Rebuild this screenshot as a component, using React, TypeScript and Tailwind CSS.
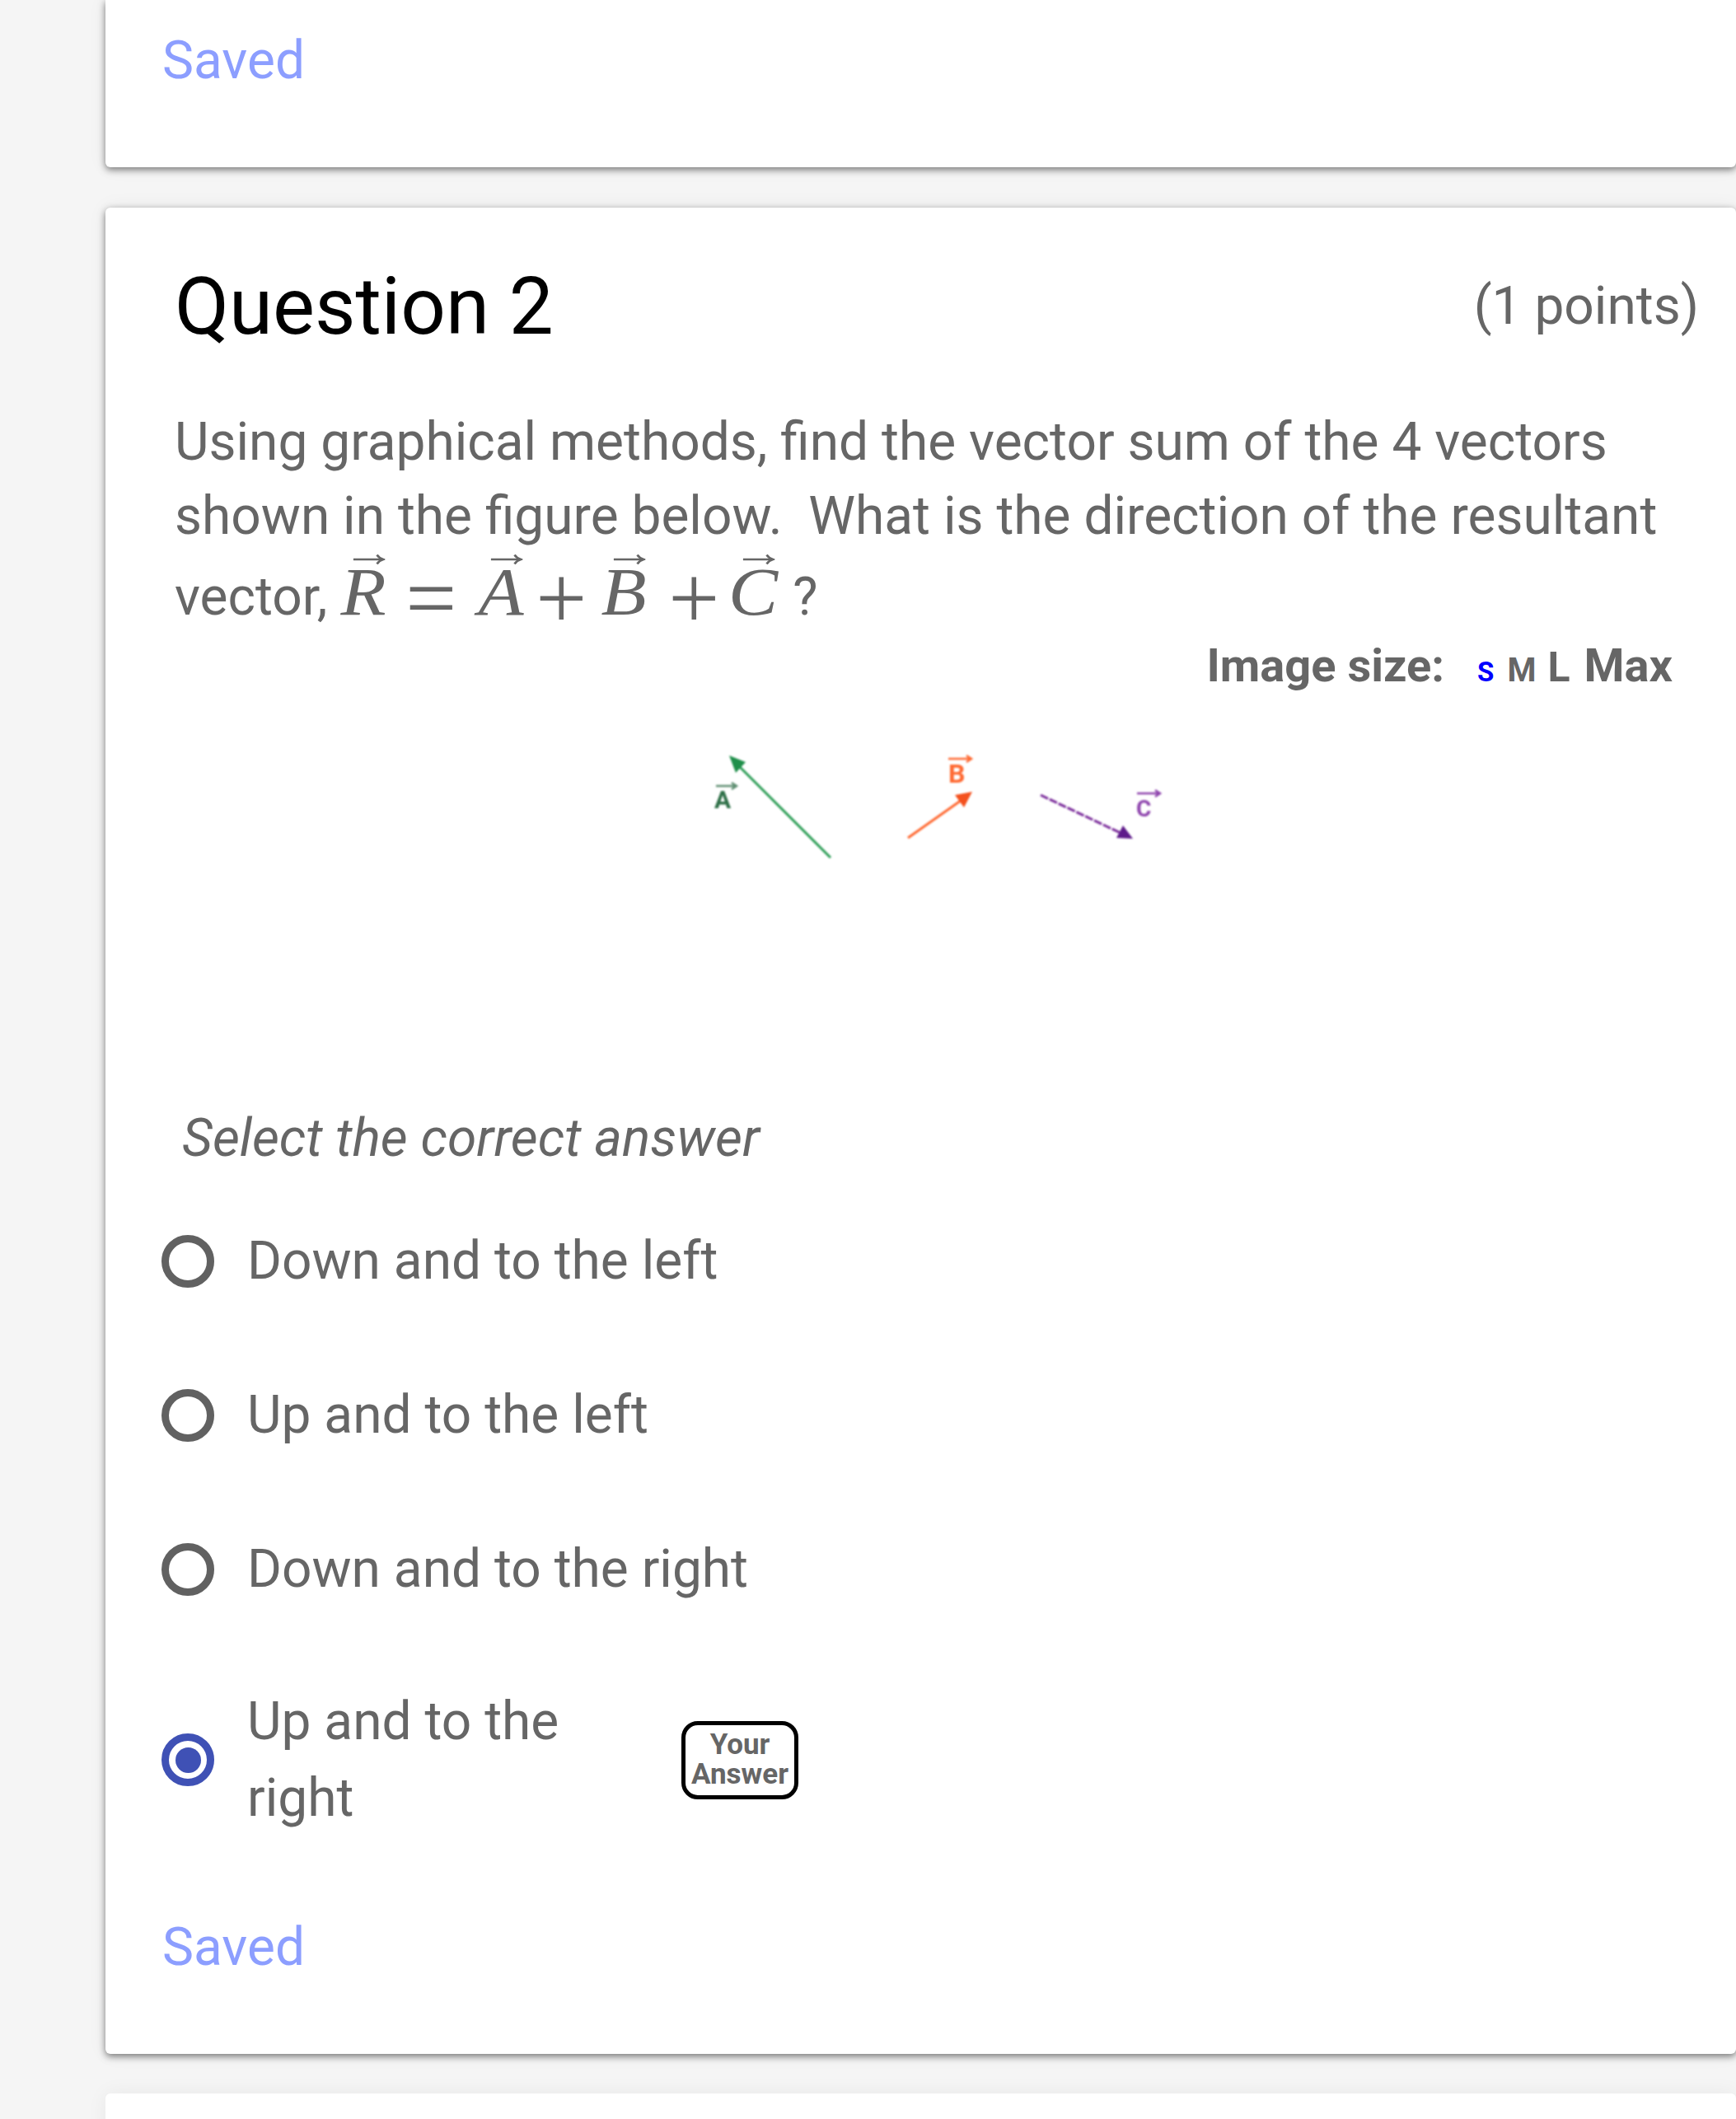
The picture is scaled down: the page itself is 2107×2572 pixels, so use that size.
const OPTIONS = ['Down and to the left', 'Up and to the left', 'Down and to the right'];

function Saved({ className }: { className: string }) {
  return <div className={`pl-[69px] text-[64px] leading-[91px] text-[#8c9eff] ${className}`}>Saved</div>;
}

function Radio({ checked = false }: { checked?: boolean }) {
  if (checked) {
    return (
      <span className="flex h-[64px] w-[64px] flex-none items-center justify-center rounded-full border-[9px] border-[#3f51b5]">
        <span className="h-[31px] w-[31px] rounded-full bg-[#3f51b5]" />
      </span>
    );
  }
  return <span className="h-[64px] w-[64px] flex-none rounded-full border-[9px] border-[#616161]" />;
}

function VecArrow() {
  return (
    <svg className="absolute left-[18px] top-[-9px]" width="36" height="16" viewBox="0 0 36 16" fill="none">
      <path d="M1 8H33" stroke="#666666" strokeWidth="2.5" />
      <path d="M27 2.5C28.5 5 30.5 7 34 8C30.5 9 28.5 11 27 13.5" stroke="#666666" strokeWidth="2.5" />
    </svg>
  );
}

function Vec({ letter, width }: { letter: string; width: string }) {
  return (
    <span className={`relative inline-block scale-x-[1.1] text-center font-['Liberation_Serif',serif] text-[82px] italic leading-[78px] ${width}`}>
      {letter}
      <VecArrow />
    </span>
  );
}

function Op({ sign, width }: { sign: string; width: string }) {
  return (
    <span className={`inline-block translate-y-[17px] text-center font-['Liberation_Serif',serif] text-[110px] leading-[74px] ${width}`}>
      {sign}
    </span>
  );
}

function VectorFigure() {
  return (
    <svg className="ml-[722px] mt-[63px] block blur-[1px]" width="570" height="140" viewBox="850 910 570 140" fill="none">
      <path d="M1008 1040L892 924" stroke="#2e9e57" strokeWidth="3" />
      <path d="M885 916L905 924L893 937Z" fill="#1f8f4a" />
      <path d="M1102 1016L1170 968" stroke="#ff6a33" strokeWidth="3" />
      <path d="M1180 960L1170 979L1159 964Z" fill="#f4511e" />
      <path d="M1263 964L1360 1010" stroke="#7b2d9b" strokeWidth="3" strokeDasharray="10 2" />
      <path d="M1375 1017L1355 1016L1363 1001Z" fill="#5e1a8a" />
      <path d="M869 953H892M888 949L894 953L888 957" stroke="#5f8f72" strokeWidth="2.5" />
      <text x="867" y="980" fontFamily="Roboto, sans-serif" fontWeight="700" fontSize="30" fill="#2f7048">A</text>
      <path d="M1151 920H1177M1173 916L1179 920L1173 924" stroke="#ff6a33" strokeWidth="2.5" />
      <text x="1151" y="949" fontFamily="Roboto, sans-serif" fontWeight="700" fontSize="32" fill="#ff6a33">B</text>
      <path d="M1380 962H1406M1402 958L1408 962L1402 966" stroke="#8e44ad" strokeWidth="2.5" />
      <text x="1379" y="990" fontFamily="Roboto, sans-serif" fontWeight="700" fontSize="28" fill="#8e44ad">C</text>
    </svg>
  );
}

export default function App() {
  return (
    <div className="h-[2572px] overflow-hidden bg-[#f5f5f5] pl-[128px] font-[Roboto,sans-serif] text-[#666666]">
      <section className="h-[203px] rounded-b-[6px] bg-white pt-[28px] shadow-[0_3px_8px_rgba(0,0,0,0.5),0_0_24px_rgba(0,0,0,0.06)]">
        <Saved className="" />
      </section>

      <section className="mt-[49px] h-[2241px] rounded-[6px] bg-white pt-[64px] shadow-[0_3px_8px_rgba(0,0,0,0.5),0_0_24px_rgba(0,0,0,0.06)]">
        <div className="flex items-center justify-between pl-[84px] pr-[45px]">
          <h2 className="text-[96px] font-normal leading-[112px] text-black">Question 2</h2>
          <span className="text-[64px] leading-[112px]">(1 points)</span>
        </div>

        <div className="ml-[84px] mt-[64px] w-[1850px] text-[64px] leading-[90px]">
          <p>Using graphical methods, find the vector sum of the 4 vectors shown in the figure below.{'\u00a0'} What is the direction of the resultant</p>
          <p className="flex h-[98px] items-baseline">
            <span className="mr-[14px]">vector,</span>
            <Vec letter="R" width="w-[60px]" />
            <Op sign="=" width="ml-[21px] w-[62px]" />
            <Vec letter="A" width="ml-[24px] w-[60px]" />
            <Op sign="+" width="ml-[12px] w-[62px]" />
            <Vec letter="B" width="ml-[15px] w-[60px]" />
            <Op sign="+" width="ml-[24px] w-[62px]" />
            <Vec letter="C" width="ml-[11px] w-[60px]" />
            <span className="ml-[18px]">?</span>
          </p>
        </div>

        <div className="mr-[77px] mt-[6px] flex items-baseline justify-end font-bold text-[#666666]">
          <span className="text-[56px] leading-[64px]">Image size:</span>
          <span className="ml-[40px] text-[33px] leading-[64px] text-[#0000ff]">S</span>
          <span className="ml-[16px] text-[40px] leading-[64px]">M</span>
          <span className="ml-[14px] text-[50px] leading-[64px]">L</span>
          <span className="ml-[17px] text-[56px] leading-[64px]">Max</span>
        </div>

        <VectorFigure />

        <p className="ml-[93px] mt-[285px] text-[64px] italic leading-[91px]">Select the correct answer</p>

        <div className="ml-[68px] mt-[58px] flex flex-col">
          {OPTIONS.map((option) => (
            <div key={option} className="mb-[96px] flex h-[91px] items-center gap-[40px] text-[64px] leading-[91px]">
              <Radio />
              <span>{option}</span>
            </div>
          ))}
          <div className="-mt-[3px] flex items-center gap-[40px] text-[64px] leading-[93px]">
            <Radio checked />
            <span className="w-[480px]">Up and to the right</span>
            <span className="ml-[7px] flex h-[95px] w-[142px] flex-col items-center justify-center rounded-[20px] border-[5px] border-black text-[35px] font-bold leading-[36px]">
              <span>Your</span>
              <span>Answer</span>
            </span>
          </div>
        </div>

        <Saved className="mt-[89px]" />
      </section>

      <section className="mt-[48px] h-[60px] rounded-[6px] bg-white shadow-[0_0_24px_rgba(0,0,0,0.06)]" />
    </div>
  );
}
